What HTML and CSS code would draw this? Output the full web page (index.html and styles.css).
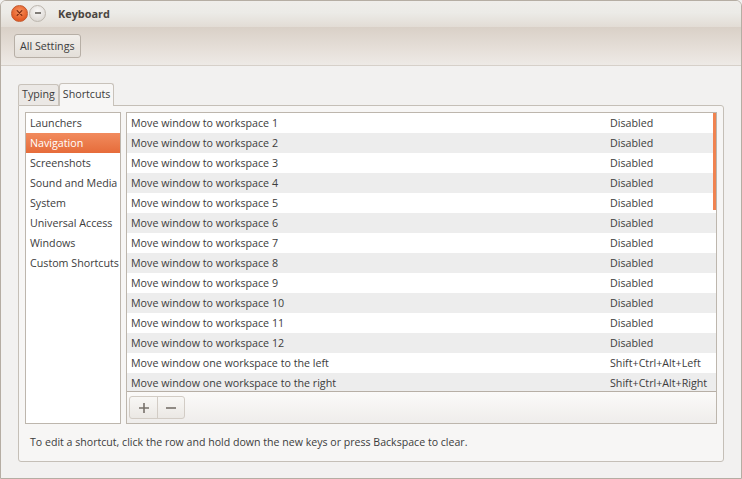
FILE: index.html
```html
<!DOCTYPE html>
<html>
<head>
<meta charset="utf-8">
<link rel="stylesheet" href="styles.css">
</head>
<body>
<div class="window">
  <div class="titlebar">
    <span class="wbtn close"><svg width="16" height="16" viewBox="0 0 16 16"><path d="M5.5 5.5l5 5M10.5 5.5l-5 5" stroke="#7a2a10" stroke-width="1.3" stroke-linecap="round"/></svg></span>
    <span class="wbtn min"><svg width="14" height="14" viewBox="0 0 14 14"><path d="M4 7h6" stroke="#5a5650" stroke-width="1.3"/></svg></span>
    <span class="title">Keyboard</span>
  </div>
  <div class="toolbar">
    <button class="btn">All Settings</button>
  </div>
  <div class="content">
    <div class="tabs">
      <div class="tab">Typing</div>
      <div class="tab active">Shortcuts</div>
    </div>
    <div class="notebook">
      <div class="lists">
        <ul class="cats">
          <li>Launchers</li>
          <li class="sel">Navigation</li>
          <li>Screenshots</li>
          <li>Sound and Media</li>
          <li>System</li>
          <li>Universal Access</li>
          <li>Windows</li>
          <li>Custom Shortcuts</li>
        </ul>
        <div class="tree">
          <div class="rows">
            <div class="row"><span class="name">Move window to workspace 1</span><span class="key">Disabled</span></div>
            <div class="row"><span class="name">Move window to workspace 2</span><span class="key">Disabled</span></div>
            <div class="row"><span class="name">Move window to workspace 3</span><span class="key">Disabled</span></div>
            <div class="row"><span class="name">Move window to workspace 4</span><span class="key">Disabled</span></div>
            <div class="row"><span class="name">Move window to workspace 5</span><span class="key">Disabled</span></div>
            <div class="row"><span class="name">Move window to workspace 6</span><span class="key">Disabled</span></div>
            <div class="row"><span class="name">Move window to workspace 7</span><span class="key">Disabled</span></div>
            <div class="row"><span class="name">Move window to workspace 8</span><span class="key">Disabled</span></div>
            <div class="row"><span class="name">Move window to workspace 9</span><span class="key">Disabled</span></div>
            <div class="row"><span class="name">Move window to workspace 10</span><span class="key">Disabled</span></div>
            <div class="row"><span class="name">Move window to workspace 11</span><span class="key">Disabled</span></div>
            <div class="row"><span class="name">Move window to workspace 12</span><span class="key">Disabled</span></div>
            <div class="row"><span class="name">Move window one workspace to the left</span><span class="key">Shift+Ctrl+Alt+Left</span></div>
            <div class="row"><span class="name">Move window one workspace to the right</span><span class="key">Shift+Ctrl+Alt+Right</span></div>
            <div class="scroll"></div>
          </div>
          <div class="treebar">
            <div class="seg">
              <span class="segbtn"><svg width="12" height="12" viewBox="0 0 12 12"><path d="M6 1v10M1 6h10" stroke="#77716b" stroke-width="1.6"/></svg></span>
              <span class="segbtn"><svg width="12" height="12" viewBox="0 0 12 12"><path d="M1 6h10" stroke="#77716b" stroke-width="1.6"/></svg></span>
            </div>
          </div>
        </div>
      </div>
      <p class="hint">To edit a shortcut, click the row and hold down the new keys or press Backspace to clear.</p>
    </div>
  </div>
</div>
</body>
</html>
```
FILE: styles.css
```css
* { box-sizing: border-box; }
html, body { margin: 0; padding: 0; }
body {
  width: 742px; height: 479px; overflow: hidden;
  font-family: "Open Sans", "DejaVu Sans", sans-serif;
  font-size: 10.7px; color: #3c3c3c;
  background: #f2f1f0;
}
.window {
  width: 742px; height: 479px;
  border: 1px solid #b5ada3;
  border-radius: 6px 6px 0 0;
  display: flex; flex-direction: column;
  background: #f2f1f0;
  overflow: hidden;
}
.titlebar {
  height: 26px; flex: none;
  display: flex; align-items: center;
  padding-left: 10px; padding-bottom: 2px;
  background: linear-gradient(#efedea 0%, #ecebe7 45%, #e2dcd5 100%);
}
.wbtn {
  width: 17px; height: 17px; border-radius: 50%;
  display: flex; align-items: center; justify-content: center;
}
.close {
  background: radial-gradient(circle at 50% 35%, #f7925e, #e45c26 70%);
  border: 1px solid #c0582e;
}
.min {
  margin-left: 1px; width: 17px; height: 17px;
  background: radial-gradient(circle at 50% 35%, #fbfaf9, #dcd8d3 80%);
  border: 1px solid #bcb6ae;
}
.title { margin-left: 12px; font-weight: bold; color: #4a4641; font-size: 10.9px; }
.toolbar {
  height: 39px; flex: none;
  display: flex; align-items: center; padding-left: 13px;
  background: linear-gradient(#d9d0c7 0%, #e4ddd6 50%, #eeeae6 100%);
  border-bottom: 1px solid #d6d0c9;
}
.btn {
  font: inherit; color: #3c3c3c;
  height: 24px; padding: 0 5px; margin-top: 0;
  border: 1px solid #b7afa6; border-radius: 3px;
  background: linear-gradient(#f1eeea, #e4dfd9);
}
.content { flex: 1; padding: 17px 17px 16px 17px; display: flex; flex-direction: column; }
.tabs { display: flex; align-items: flex-end; height: 22px; padding-left: 0; position: relative; z-index: 1; }
.tab {
  height: 21px; padding: 0 3px; line-height: 19px;
  border: 1px solid #c8c2ba; border-bottom: none; border-radius: 3px 3px 0 0;
  background: #ebe8e5; color: #3c3c3c;
}
.tab.active { height: 23px; background: #f7f6f5; margin-bottom: -1px; line-height: 21px; }
.notebook {
  flex: 1;
  border: 1px solid #c5bfb7; border-radius: 0 3px 3px 3px;
  background: #f7f6f5;
  padding: 6px 6px 0 6px;
  display: flex; flex-direction: column;
}
.lists { display: flex; height: 312px; gap: 5px; }
.cats {
  list-style: none; margin: 0; padding: 0;
  width: 96px; flex: none;
  background: #fff; border: 1px solid #bdb6ad;
}
.cats li { height: 20px; line-height: 20px; padding-left: 4px; white-space: nowrap; }
.cats li.sel { background: linear-gradient(#f18b5e, #e66c3a); color: #fff; }
.tree {
  flex: 1; border: 1px solid #bdb6ad; background: #fff;
  display: flex; flex-direction: column;
}
.rows { flex: 1; overflow: hidden; position: relative; }
.row { height: 20px; line-height: 20px; display: flex; padding-left: 4px; white-space: nowrap; }
.row:nth-child(even) { background: #ededed; }
.name { flex: 1; }
.key { width: 106px; flex: none; }
.scroll { position: absolute; right: 0; top: 0; width: 3px; height: 97px; background: #f08350; }
.treebar {
  height: 32px; flex: none;
  border-top: 1px solid #b7afa6;
  background: linear-gradient(#fbfaf9, #efedeb);
  padding: 4px 0 0 2px;
}
.seg { display: inline-flex; border: 1px solid #d2ccc5; border-radius: 3px; background: linear-gradient(#f8f7f5, #ebe8e4); }
.segbtn { width: 27px; height: 21px; display: flex; align-items: center; justify-content: center; }
.segbtn + .segbtn { border-left: 1px solid #d2ccc5; }
.hint { margin: 11px 0 0 5px; color: #3c3c3c; white-space: nowrap; font-size: 10.6px; }
```
